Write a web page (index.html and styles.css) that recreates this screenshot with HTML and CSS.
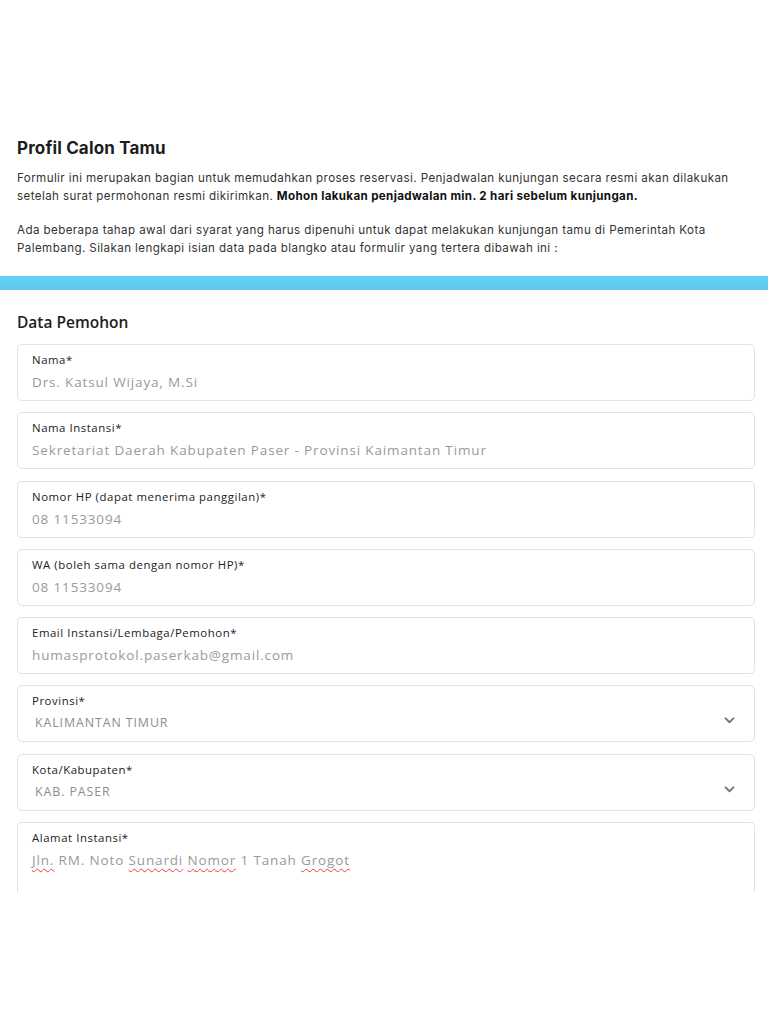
FILE: index.html
```html
<!DOCTYPE html>
<html lang="id">
<head>
<meta charset="utf-8">
<title>Profil Calon Tamu</title>
<link rel="stylesheet" href="styles.css">
</head>
<body>
<div class="page">
  <section class="intro">
    <h1 class="intro-title">Profil Calon Tamu</h1>
    <p class="intro-text">Formulir ini merupakan bagian untuk memudahkan proses reservasi. Penjadwalan kunjungan secara resmi akan dilakukan setelah surat permohonan resmi dikirimkan. <b>Mohon lakukan penjadwalan min. 2 hari sebelum kunjungan.</b></p>
    <p class="intro-text">Ada beberapa tahap awal dari syarat yang harus dipenuhi untuk dapat melakukan kunjungan tamu di Pemerintah Kota Palembang. Silakan lengkapi isian data pada blangko atau formulir yang tertera dibawah ini :</p>
  </section>
  <div class="band"></div>
  <section class="form">
    <h2 class="form-title">Data Pemohon</h2>
    <div class="field"><div class="label">Nama*</div><div class="value">Drs. Katsul Wijaya, M.Si</div></div>
    <div class="field"><div class="label">Nama Instansi*</div><div class="value">Sekretariat Daerah Kabupaten Paser - Provinsi Kaimantan Timur</div></div>
    <div class="field"><div class="label">Nomor HP (dapat menerima panggilan)*</div><div class="value">08 11533094</div></div>
    <div class="field"><div class="label">WA (boleh sama dengan nomor HP)*</div><div class="value">08 11533094</div></div>
    <div class="field"><div class="label">Email Instansi/Lembaga/Pemohon*</div><div class="value">humasprotokol.paserkab@gmail.com</div></div>
    <div class="field select"><div class="label">Provinsi*</div><div class="value caps">KALIMANTAN TIMUR</div>
      <svg class="chev" viewBox="0 0 12 8" width="11" height="7"><path d="M1.5 1.5 L6 6 L10.5 1.5" fill="none" stroke="#777" stroke-width="2.2" stroke-linecap="round" stroke-linejoin="round"/></svg></div>
    <div class="field select"><div class="label">Kota/Kabupaten*</div><div class="value caps">KAB. PASER</div>
      <svg class="chev" viewBox="0 0 12 8" width="11" height="7"><path d="M1.5 1.5 L6 6 L10.5 1.5" fill="none" stroke="#777" stroke-width="2.2" stroke-linecap="round" stroke-linejoin="round"/></svg></div>
    <div class="field area"><div class="label">Alamat Instansi*</div><div class="value"><span class="sp">Jln.</span> RM. Noto <span class="sp">Sunardi</span> <span class="sp">Nomor</span> 1 Tanah <span class="sp">Grogot</span></div></div>
  </section>
</div>
</body>
</html>
```

FILE: styles.css
```css
* { box-sizing: border-box; }
html, body { margin: 0; padding: 0; background: #fff; }
body { font-family: "Open Sans", sans-serif; color: #222; }
.page { width: 768px; height: 892px; overflow: hidden; }
.intro {
  padding: 137px 17px 19px;
  font-family: Inter, Roboto, "Liberation Sans", sans-serif;
  background: #fff;
}
.intro-title { margin: 0 0 10px; font-size: 17px; font-weight: 700; color: #1d1d1d; line-height: 22px; letter-spacing: 0.15px; }
.intro-text { margin: 0 0 16px; font-size: 11.6px; line-height: 18px; color: #333; letter-spacing: 0.4px; }
.intro-text:last-child { margin-bottom: 0; }
.intro-text b { font-weight: 700; color: #111; letter-spacing: 0.35px; }
.band { height: 14px; background: linear-gradient(#63d3f4, #5ec8ef); }
.form { padding: 22px 13px 0 17px; }
.form-title { margin: 0 0 12px; font-size: 15.5px; font-weight: 600; color: #1d1d1d; line-height: 20px; }
.field {
  position: relative;
  height: 57px;
  border: 1px solid #e2e2e2;
  border-radius: 5px;
  padding: 8px 14px 0;
  margin-bottom: 11.3px;
}
.label { font-size: 11.4px; line-height: 14px; color: #222; letter-spacing: 0.55px; }
.value { margin-top: 6px; font-size: 13.5px; line-height: 18px; color: #9a9a9a; white-space: nowrap; letter-spacing: 0.85px; }
.caps { font-size: 12.4px; padding-left: 3px; letter-spacing: 0.9px; color: #8d8d8d; }
.chev { position: absolute; right: 19px; top: 31px; }
.area { height: 80px; }
.sp { text-decoration: underline wavy #e04040; text-decoration-thickness: 1px; text-underline-offset: 3px; }
```
